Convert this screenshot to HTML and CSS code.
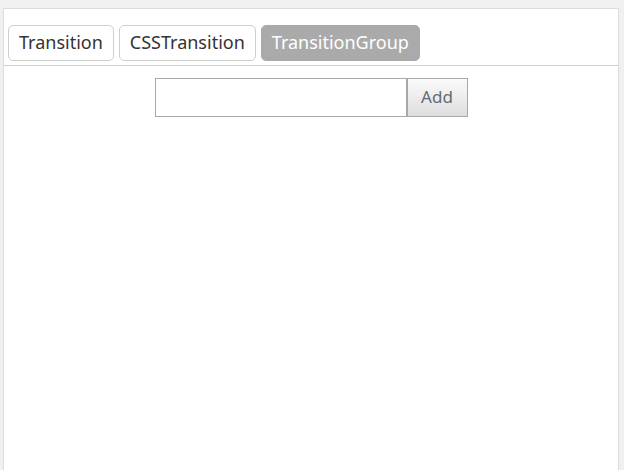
FILE: index.html
```html
<!DOCTYPE html>
<html>
<head>
<meta charset="utf-8">
<link rel="stylesheet" href="styles.css">
</head>
<body>
<div class="panel">
  <div class="tabs">
    <button class="tab">Transition</button>
    <button class="tab">CSSTransition</button>
    <button class="tab active">TransitionGroup</button>
  </div>
  <div class="content">
    <div class="form">
      <input class="field" type="text">
      <button class="add">Add</button>
    </div>
  </div>
</div>
</body>
</html>
```

FILE: styles.css
```css
html, body {
  margin: 0;
  padding: 0;
  background: #f0f0f0;
  height: 100%;
  overflow: hidden;
}
body {
  padding: 8px 5px 0 3px;
  box-sizing: border-box;
  font-family: "Noto Sans", "Open Sans", sans-serif;
}
.panel {
  background: #fff;
  border: 1px solid #dcdcdc;
  border-bottom: none;
  height: 100%;
  box-sizing: border-box;
}
.tabs {
  display: flex;
  gap: 5px;
  padding: 16px 0 4px 4px;
  border-bottom: 1px solid #cfcfcf;
}
.tab {
  font-family: inherit;
  font-size: 18px;
  color: #333;
  background: #fff;
  border: 1px solid #cfcfcf;
  border-radius: 5px;
  height: 36px;
  padding: 0 10px 2px;
  line-height: 1;
}
.tab.active {
  background: #aaaaaa;
  border-color: #aaaaaa;
  color: #fff;
}
.content {
  display: flex;
  justify-content: center;
  padding-top: 12px;
}
.form {
  display: flex;
}
.field {
  width: 252px;
  height: 39px;
  box-sizing: border-box;
  border: 1px solid #a9a9a9;
  padding: 0 4px;
  margin: 0;
  outline: none;
}
.add {
  width: 61px;
  height: 39px;
  box-sizing: border-box;
  margin: 0;
  border: 1px solid #a9a9a9;
  background: linear-gradient(#fafafa, #dedede);
  color: #626a72;
  font-family: inherit;
  font-size: 17px;
  padding: 0 0 2px;
}
```
